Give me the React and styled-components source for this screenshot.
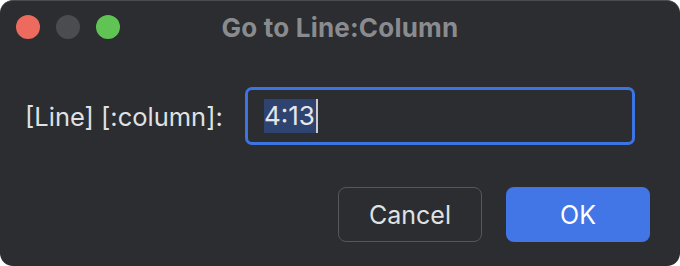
import React from "react"
import styled, { createGlobalStyle } from "styled-components"

const GlobalStyle = createGlobalStyle`
  html, body {
    margin: 0;
    background: #ffffff;
  }
  body {
    font-family: Inter, "Liberation Sans", sans-serif;
  }
`

const Window = styled.div`
  width: 680px;
  height: 266px;
  box-sizing: border-box;
  background: #2b2d30;
  border-radius: 13px;
  border-top: 1px solid #4a4c50;
  display: flex;
  flex-direction: column;
  overflow: hidden;
`

const TitleBar = styled.div`
  position: relative;
  height: 53px;
  display: flex;
  align-items: center;
  justify-content: center;
`

const Lights = styled.div`
  position: absolute;
  left: 16px;
  top: 14px;
  display: flex;
  gap: 16px;
`

const Light = styled.span`
  width: 24px;
  height: 24px;
  border-radius: 50%;
  background: ${(p) => p.color};
`

const Title = styled.h1`
  margin: 0;
  font-size: 26px;
  font-weight: 700;
  color: #8a8b8e;
  letter-spacing: 0.2px;
`

const Body = styled.div`
  flex: 1;
  display: flex;
  flex-direction: column;
  padding: 33px 30px 0 25px;
`

const FieldRow = styled.div`
  display: flex;
  align-items: center;
  gap: 22px;
`

const Label = styled.label`
  width: 198px;
  font-size: 25.5px;
  color: #dfe1e5;
  white-space: nowrap;
`

const InputBox = styled.div`
  width: 390px;
  height: 58px;
  box-sizing: border-box;
  border: 3px solid #3d74e4;
  border-radius: 7px;
  display: flex;
  align-items: center;
  padding-left: 16px;
`

const Selected = styled.span`
  font-size: 26px;
  color: #e4e6ea;
  background: #2f4370;
  line-height: 34px;
  padding-right: 1px;
`

const Caret = styled.span`
  width: 2px;
  height: 34px;
  background: #c9cbd0;
`

const Footer = styled.div`
  display: flex;
  justify-content: flex-end;
  gap: 24px;
  margin-top: 42px;
`

const Button = styled.button`
  width: 144px;
  height: 55px;
  box-sizing: border-box;
  border-radius: 8px;
  font-family: inherit;
  font-size: 25px;
  cursor: pointer;
  color: ${(p) => (p.$primary ? "#ffffff" : "#dfe1e5")};
  background: ${(p) => (p.$primary ? "#4276e6" : "transparent")};
  border: ${(p) => (p.$primary ? "none" : "1.5px solid #55575c")};
`

export default function App() {
  return (
    <>
      <GlobalStyle />
      <Window>
        <TitleBar>
          <Lights>
            <Light color="#ed6a5e" />
            <Light color="#4b4c4f" />
            <Light color="#5fc454" />
          </Lights>
          <Title>Go to Line:Column</Title>
        </TitleBar>
        <Body>
          <FieldRow>
            <Label>[Line] [:column]:</Label>
            <InputBox>
              <Selected>4:13</Selected>
              <Caret />
            </InputBox>
          </FieldRow>
          <Footer>
            <Button>Cancel</Button>
            <Button $primary>OK</Button>
          </Footer>
        </Body>
      </Window>
    </>
  )
}
